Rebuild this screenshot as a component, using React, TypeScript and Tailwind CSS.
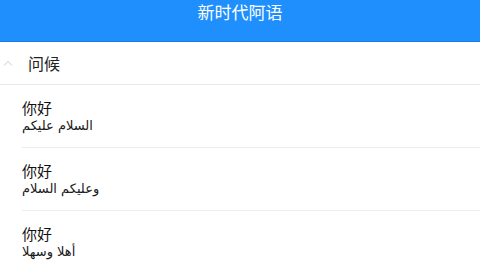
import React from "react";

const items = ["السلام عليكم", "وعليكم السلام", "أهلا وسهلا"];

export default function App() {
  return (
    <div
      className="w-[480px] h-[263px] overflow-hidden bg-white"
      style={{ fontFamily: '"Noto Sans CJK SC", "DejaVu Sans", sans-serif' }}
    >
      <div className="h-[42px] bg-[#1e8ffd] border-b border-[#1a7be0] flex items-start justify-center">
        <span className="text-white text-[17px] leading-[24px]">新时代阿语</span>
      </div>
      <div className="h-[43px] flex items-center border-b border-[#e8e8e8]">
        <svg width="10" height="6" viewBox="0 0 10 6" className="ml-[3px] mr-[15px]">
          <path d="M1 5.5 L5 1.5 L9 5.5" fill="none" stroke="#c8c8c8" strokeWidth="1" />
        </svg>
        <span className="text-[16px] text-[#222] leading-[20px]">问候</span>
      </div>
      {items.map((a, i) => (
        <div key={i} className="pl-[22px]">
          <div className="pt-[13px] pb-[13px] border-b border-[#ececec] flex flex-col">
            <span className="text-[15px] leading-[20px] text-[#111]">你好</span>
            <span
              className="text-[13px] leading-[16px] text-[#1a1a1a] self-start"
              dir="rtl"
              style={{ fontFamily: '"DejaVu Sans", sans-serif' }}
            >
              {a}
            </span>
          </div>
        </div>
      ))}
    </div>
  );
}
